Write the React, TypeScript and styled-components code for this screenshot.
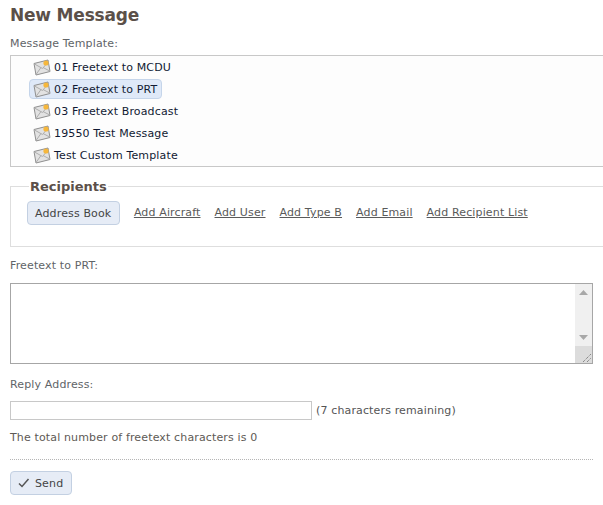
import React from 'react';
import styled, { createGlobalStyle } from 'styled-components';

const GlobalStyle = createGlobalStyle`
  html, body {
    margin: 0;
    padding: 0;
    background: #fff;
    overflow: hidden;
  }
  body {
    font-family: 'DejaVu Sans', Verdana, sans-serif;
    font-size: 11px;
    letter-spacing: 0.14px;
    color: #555;
  }
`;

const Page = styled.div`
  width: 640px;
  height: 505px;
  padding: 6px 0 0 10px;
  box-sizing: border-box;
`;

const Title = styled.h1`
  margin: 0 0 12px;
  font-size: 17px;
  line-height: 19px;
  font-weight: bold;
  letter-spacing: -0.2px;
  color: #5b5049;
`;

const FieldLabel = styled.div<{ $gap?: number }>`
  line-height: 14px;
  color: #5f6468;
  margin-bottom: ${props => props.$gap ?? 4}px;
`;

const TemplateList = styled.ul`
  list-style: none;
  margin: 0 0 12px;
  padding: 0 0 0 18px;
  height: 110px;
  border: 1px solid #c8c8c8;
  background: #fdfdfd;
`;

const TemplateItem = styled.li`
  height: 22px;
  display: flex;
  align-items: center;
`;

const TemplateTag = styled.span<{ $selected?: boolean }>`
  display: inline-flex;
  align-items: center;
  gap: 3px;
  height: 20px;
  padding: 0 4px 0 3px;
  box-sizing: border-box;
  border-radius: 4px;
  color: #111a33;
  border: 1px solid ${props => (props.$selected ? '#c5d5ea' : 'transparent')};
  background: ${props => (props.$selected ? '#dfe9f8' : 'transparent')};
`;

const Recipients = styled.fieldset`
  margin: 0 0 12px;
  padding: 0 0 0 16px;
  height: 68px;
  box-sizing: border-box;
  border: 1px solid #dedede;
`;

const RecipientsLegend = styled.legend`
  margin-left: 2px;
  padding: 0 1px;
  font-size: 13px;
  line-height: 15px;
  font-weight: bold;
  letter-spacing: 0;
  color: #5b5049;
`;

const RecipientRow = styled.div`
  display: flex;
  align-items: flex-start;
  gap: 14px;
  margin-top: 7px;
`;

const Button = styled.button`
  display: inline-flex;
  align-items: center;
  height: 24px;
  padding: 0 7.5px 0 7px;
  gap: 5px;
  font: inherit;
  letter-spacing: inherit;
  color: #444;
  background: #e6ecf6;
  border: 1px solid #c3d0e2;
  border-radius: 4px;
`;

const AddLink = styled.a`
  line-height: 23px;
  color: #5a5a5a;
  text-decoration: underline;
`;

const MessageBox = styled.div`
  display: flex;
  width: 583px;
  height: 81px;
  box-sizing: border-box;
  border: 1px solid #a6a6a6;
  margin-bottom: 14px;
`;

const MessageArea = styled.div`
  flex: 1;
  background: #fff;
`;

const ScrollTrack = styled.div`
  width: 17px;
  display: flex;
  flex-direction: column;
  background: #f0f0f0;
`;

const ScrollArrows = styled.div`
  flex: 1;
  display: flex;
  flex-direction: column;
  justify-content: space-between;
  align-items: center;
  padding: 6px 0;
`;

const ScrollCorner = styled.div`
  height: 17px;
  background: #dcdcdc;
  display: flex;
`;

const ReplyRow = styled.div`
  display: flex;
  align-items: center;
  gap: 4px;
  margin-bottom: 11px;
`;

const ReplyInput = styled.input`
  width: 302px;
  height: 19px;
  padding: 0;
  box-sizing: border-box;
  border: 1px solid #c8c8c8;
  background: #fff;
`;

const Note = styled.div`
  line-height: 14px;
  color: #5e5a55;
`;

const Divider = styled.hr`
  width: 583px;
  margin: 14px 0 11px;
  border: 0;
  border-top: 1px dotted #b5b5b5;
`;

const EnvelopeIcon = () => (
  <svg width="18" height="17" viewBox="0 0 18 17" aria-hidden="true">
    <path d="M1 4.5 L15 1 L17 12.5 L3 16 Z" fill="#e2e2e2" stroke="#8f8f8f" strokeWidth="1" />
    <path d="M1.5 5 L9.5 9.5 L16 2 M3 15.5 L8 8.5 M16.7 12 L10 8.5" fill="none" stroke="#adadad" strokeWidth="1" />
    <circle cx="13" cy="4" r="2.6" fill="#f6b73c" />
  </svg>
);

const CheckIcon = () => (
  <svg width="12" height="10" viewBox="0 0 12 10" aria-hidden="true">
    <path d="M1 5.5 L4 8.5 L10.5 1" fill="none" stroke="#555" strokeWidth="1.5" />
  </svg>
);

const templates = [
  '01 Freetext to MCDU',
  '02 Freetext to PRT',
  '03 Freetext Broadcast',
  '19550 Test Message',
  'Test Custom Template',
];

const recipientLinks = ['Add Aircraft', 'Add User', 'Add Type B', 'Add Email', 'Add Recipient List'];

function App() {
  return (
    <Page>
      <GlobalStyle />
      <Title>New Message</Title>
      <FieldLabel>Message Template:</FieldLabel>
      <TemplateList>
        {templates.map(name => (
          <TemplateItem key={name}>
            <TemplateTag $selected={name === '02 Freetext to PRT'}>
              <EnvelopeIcon />
              {name}
            </TemplateTag>
          </TemplateItem>
        ))}
      </TemplateList>
      <Recipients>
        <RecipientsLegend>Recipients</RecipientsLegend>
        <RecipientRow>
          <Button type="button">Address Book</Button>
          {recipientLinks.map(label => (
            <AddLink key={label}>{label}</AddLink>
          ))}
        </RecipientRow>
      </Recipients>
      <FieldLabel $gap={10}>Freetext to PRT:</FieldLabel>
      <MessageBox>
        <MessageArea />
        <ScrollTrack>
          <ScrollArrows>
            <svg width="9" height="5" viewBox="0 0 9 5" aria-hidden="true">
              <path d="M4.5 0 L9 5 L0 5 Z" fill="#a8a8a8" />
            </svg>
            <svg width="9" height="5" viewBox="0 0 9 5" aria-hidden="true">
              <path d="M0 0 L9 0 L4.5 5 Z" fill="#a8a8a8" />
            </svg>
          </ScrollArrows>
          <ScrollCorner>
            <svg width="17" height="17" viewBox="0 0 17 17" aria-hidden="true">
              <path d="M8 16 L16 8 M12 16 L16 12" stroke="#666" strokeWidth="1" strokeDasharray="1 1" />
            </svg>
          </ScrollCorner>
        </ScrollTrack>
      </MessageBox>
      <FieldLabel $gap={9}>Reply Address:</FieldLabel>
      <ReplyRow>
        <ReplyInput />
        <span>(7 characters remaining)</span>
      </ReplyRow>
      <Note>The total number of freetext characters is 0</Note>
      <Divider />
      <Button type="button">
        <CheckIcon />
        Send
      </Button>
    </Page>
  );
}

export default App;
